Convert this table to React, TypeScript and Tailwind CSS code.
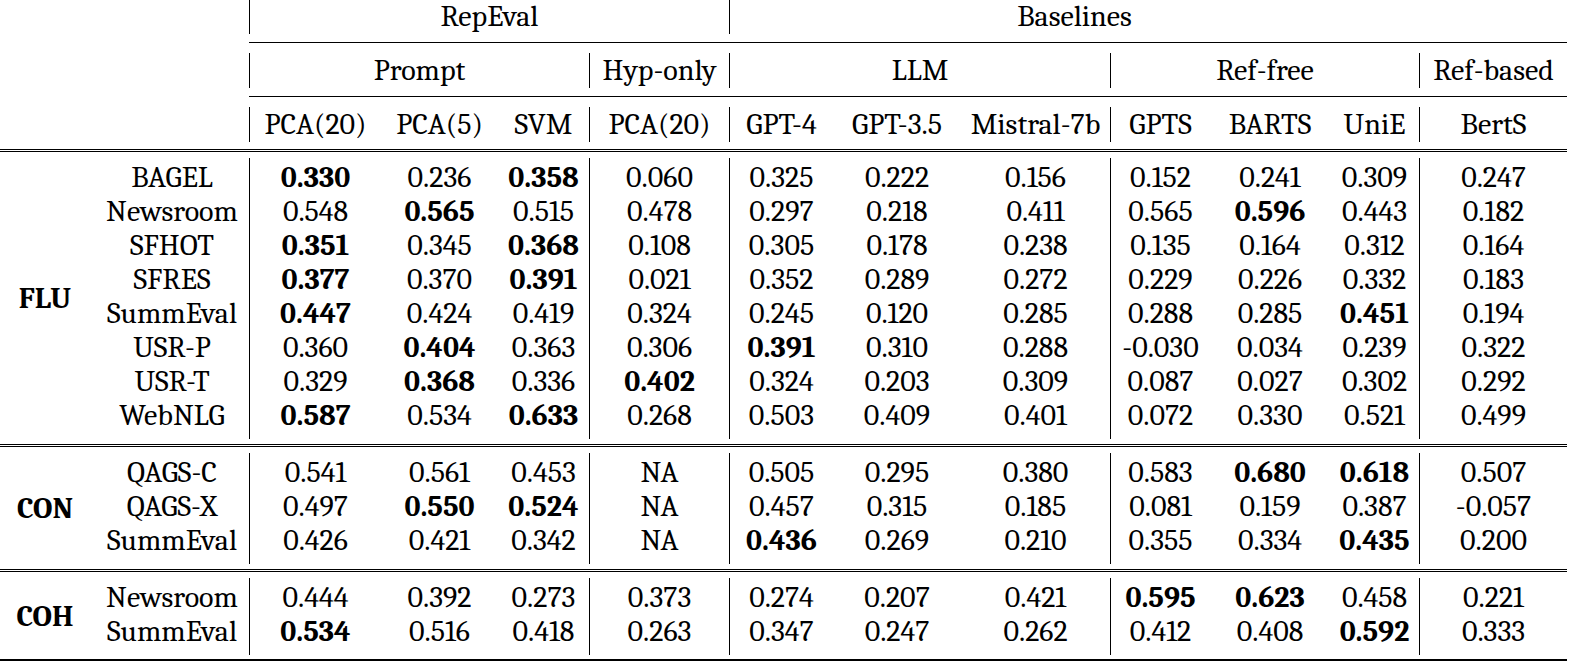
import React from 'react';

type Block = {
  label: string;
  rows: { name: string; values: string[] }[];
};

// '*' marks a bold (best) value
const blocks: Block[] = [
  {
    label: 'FLU',
    rows: [
      { name: 'BAGEL', values: ['*0.330', '0.236', '*0.358', '0.060', '0.325', '0.222', '0.156', '0.152', '0.241', '0.309', '0.247'] },
      { name: 'Newsroom', values: ['0.548', '*0.565', '0.515', '0.478', '0.297', '0.218', '0.411', '0.565', '*0.596', '0.443', '0.182'] },
      { name: 'SFHOT', values: ['*0.351', '0.345', '*0.368', '0.108', '0.305', '0.178', '0.238', '0.135', '0.164', '0.312', '0.164'] },
      { name: 'SFRES', values: ['*0.377', '0.370', '*0.391', '0.021', '0.352', '0.289', '0.272', '0.229', '0.226', '0.332', '0.183'] },
      { name: 'SummEval', values: ['*0.447', '0.424', '0.419', '0.324', '0.245', '0.120', '0.285', '0.288', '0.285', '*0.451', '0.194'] },
      { name: 'USR-P', values: ['0.360', '*0.404', '0.363', '0.306', '*0.391', '0.310', '0.288', '-0.030', '0.034', '0.239', '0.322'] },
      { name: 'USR-T', values: ['0.329', '*0.368', '0.336', '*0.402', '0.324', '0.203', '0.309', '0.087', '0.027', '0.302', '0.292'] },
      { name: 'WebNLG', values: ['*0.587', '0.534', '*0.633', '0.268', '0.503', '0.409', '0.401', '0.072', '0.330', '0.521', '0.499'] }
    ]
  },
  {
    label: 'CON',
    rows: [
      { name: 'QAGS-C', values: ['0.541', '0.561', '0.453', 'NA', '0.505', '0.295', '0.380', '0.583', '*0.680', '*0.618', '0.507'] },
      { name: 'QAGS-X', values: ['0.497', '*0.550', '*0.524', 'NA', '0.457', '0.315', '0.185', '0.081', '0.159', '0.387', '-0.057'] },
      { name: 'SummEval', values: ['0.426', '0.421', '0.342', 'NA', '*0.436', '0.269', '0.210', '0.355', '0.334', '*0.435', '0.200'] }
    ]
  },
  {
    label: 'COH',
    rows: [
      { name: 'Newsroom', values: ['0.444', '0.392', '0.273', '0.373', '0.274', '0.207', '0.421', '*0.595', '*0.623', '0.458', '0.221'] },
      { name: 'SummEval', values: ['*0.534', '0.516', '0.418', '0.263', '0.347', '0.247', '0.262', '0.412', '0.408', '*0.592', '0.333'] }
    ]
  }
];

const headers = ['PCA(20)', 'PCA(5)', 'SVM', 'PCA(20)', 'GPT-4', 'GPT-3.5', 'Mistral-7b', 'GPTS', 'BARTS', 'UniE', 'BertS'];

// columns that open with a vertical rule
const barCols = [0, 3, 4, 7, 10];

const dataGrid = 'grid grid-cols-[132px_117px_91px_140px_104px_128px_149px_100px_120px_89px_148px]';

function Cell({ col, value, pad }: { col: number; value: string; pad: string }) {
  const bold = value.startsWith('*');
  return (
    <div
      className={`flex h-full items-center justify-center ${pad} ${barCols.includes(col) ? 'border-l border-black' : ''} ${
        bold ? 'font-bold' : ''
      }`}
    >
      {bold ? value.slice(1) : value}
    </div>
  );
}

function DataBlock({ block }: { block: Block }) {
  const last = block.rows.length - 1;
  return (
    <div className="flex">
      <div className="flex w-[95px] items-center justify-center pr-[5px] font-bold">{block.label}</div>
      <div className="flex flex-col">
        {block.rows.map((row, i) => {
          const pad = i === 0 ? 'pt-[3px]' : i === last ? 'pb-[6px]' : '';
          const h = i === 0 ? 'h-[37px]' : i === last ? 'h-[40px]' : 'h-[34px]';
          return (
            <div key={row.name + i} className={`flex ${h}`}>
              <div className={`flex w-[154px] items-center justify-center ${pad}`}>{row.name}</div>
              <div className={dataGrid}>
                {row.values.map((v, c) => (
                  <Cell key={c} col={c} value={v} pad={pad} />
                ))}
              </div>
            </div>
          );
        })}
      </div>
    </div>
  );
}

function DoubleRule() {
  return <div className="h-[3px] w-[1567px] border-y border-black" />;
}

export default function App() {
  return (
    <div className="min-h-screen w-[1571px] bg-white font-serif text-[30px] leading-none text-black">
      {/* header row 1 */}
      <div className="flex h-[34px]">
        <div className="w-[249px]" />
        <div className="flex w-[480px] items-center justify-center border-l border-black">RepEval</div>
        <div className="flex w-[838px] items-center justify-center border-l border-black pr-[148px]">Baselines</div>
      </div>
      <div className="ml-[249px] mt-[8px] h-px w-[1318px] bg-black" />

      {/* header row 2 */}
      <div className="mt-[10px] flex h-[35px]">
        <div className="w-[249px]" />
        <div className="flex w-[340px] items-center justify-center border-l border-black">Prompt</div>
        <div className="flex w-[140px] items-center justify-center border-l border-black">Hyp-only</div>
        <div className="flex w-[381px] items-center justify-center border-l border-black">LLM</div>
        <div className="flex w-[309px] items-center justify-center border-l border-black">Ref-free</div>
        <div className="flex w-[148px] items-center justify-center border-l border-black">Ref-based</div>
      </div>
      <div className="ml-[249px] mt-[8px] h-px w-[1318px] bg-black" />

      {/* header row 3 */}
      <div className="mt-[10px] flex h-[35px]">
        <div className="w-[249px]" />
        <div className={dataGrid}>
          {headers.map((h, c) => (
            <div
              key={c}
              className={`flex h-full items-center justify-center ${barCols.includes(c) ? 'border-l border-black' : ''}`}
            >
              {h}
            </div>
          ))}
        </div>
      </div>

      <div className="mt-[7px]">
        <DoubleRule />
      </div>
      <div className="mt-[6px]">
        <DataBlock block={blocks[0]} />
      </div>
      <div className="mt-[5px]">
        <DoubleRule />
      </div>
      <div className="mt-[6px]">
        <DataBlock block={blocks[1]} />
      </div>
      <div className="mt-[5px]">
        <DoubleRule />
      </div>
      <div className="mt-[6px]">
        <DataBlock block={blocks[2]} />
      </div>
      <div className="mt-[4px] h-[3px] w-[1567px] bg-black" />
    </div>
  );
}
